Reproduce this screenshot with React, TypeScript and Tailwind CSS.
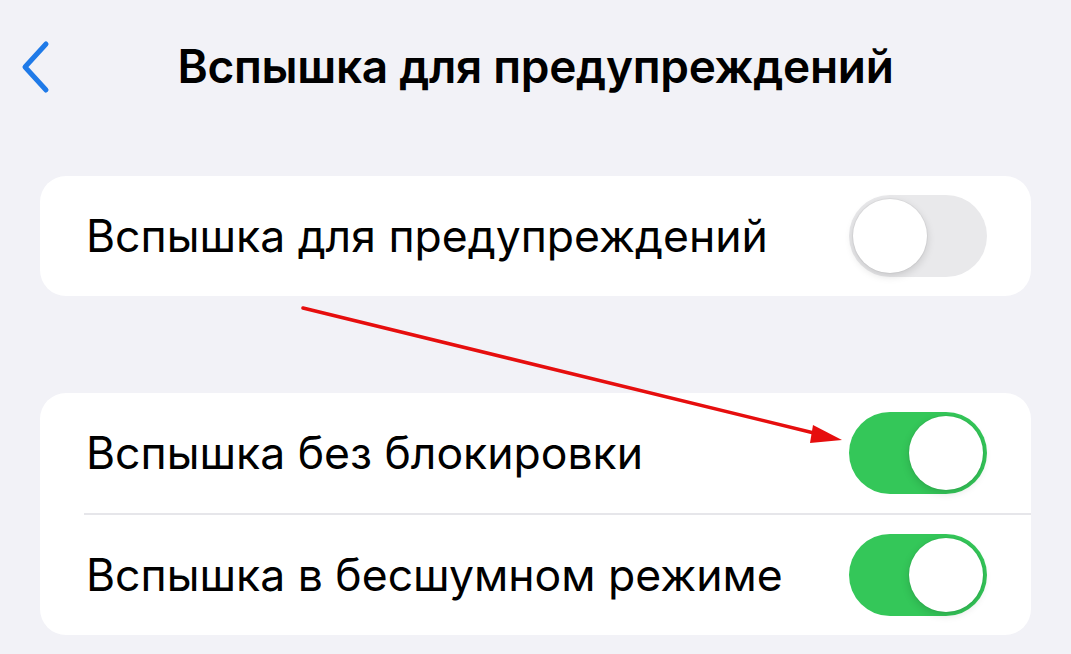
import { useState } from 'react';

type ToggleProps = {
  on: boolean;
  onChange: () => void;
};

function Toggle({ on, onChange }: ToggleProps) {
  return (
    <button
      onClick={onChange}
      className={`relative h-[82px] w-[138px] shrink-0 rounded-full transition-colors ${
        on ? 'bg-[#34c759]' : 'bg-[#e9e9eb]'
      }`}
    >
      <span
        className={`absolute top-[4px] h-[74px] w-[74px] rounded-full bg-white shadow-[0_3px_8px_rgba(0,0,0,0.15),0_0_0_1px_rgba(0,0,0,0.04)] transition-all ${
          on ? 'left-[60px]' : 'left-[4px]'
        }`}
      />
    </button>
  );
}

export default function App() {
  const [alertFlash, setAlertFlash] = useState(false);
  const [unlocked, setUnlocked] = useState(true);
  const [silent, setSilent] = useState(true);

  return (
    <div
      className="relative h-[654px] w-[1071px] overflow-hidden bg-[#f2f2f7] text-black"
      style={{ fontFamily: 'Inter, "Noto Sans", sans-serif' }}
    >
      {/* Nav bar */}
      <div className="relative flex h-[136px] items-center justify-center pb-[4px]">
        <button className="absolute left-[14px] top-[36px] p-1">
          <svg width="34" height="54" viewBox="0 0 34 54" fill="none">
            <path
              d="M28 4 L7 27 L28 50"
              stroke="#1f7ae8"
              strokeWidth="5"
              strokeLinecap="round"
              strokeLinejoin="round"
            />
          </svg>
        </button>
        <h1 className="text-[46px] font-semibold tracking-[-0.3px]">Вспышка для предупреждений</h1>
      </div>

      <div className="flex flex-col gap-[97px] px-[40px] pt-[40px]">
        {/* Main switch */}
        <div className="flex h-[120px] items-center justify-between rounded-[26px] bg-white pl-[46px] pr-[44px]">
          <span className="text-[44.5px]">Вспышка для предупреждений</span>
          <Toggle on={alertFlash} onChange={() => setAlertFlash(!alertFlash)} />
        </div>

        {/* Options */}
        <div className="rounded-[26px] bg-white">
          <div className="flex h-[120px] items-center justify-between pl-[46px] pr-[44px]">
            <span className="text-[44.5px]">Вспышка без блокировки</span>
            <Toggle on={unlocked} onChange={() => setUnlocked(!unlocked)} />
          </div>
          <div className="ml-[44px] h-[2px] bg-[#e6e6ea]" />
          <div className="flex h-[120px] items-center justify-between pl-[46px] pr-[44px]">
            <span className="text-[44.5px]">Вспышка в бесшумном режиме</span>
            <Toggle on={silent} onChange={() => setSilent(!silent)} />
          </div>
        </div>
      </div>

      {/* Annotation arrow */}
      <svg
        className="pointer-events-none absolute left-0 top-0"
        width="1071"
        height="654"
        viewBox="0 0 1071 654"
      >
        <line x1="303" y1="308" x2="818" y2="434" stroke="#e60e0e" strokeWidth="3.5" strokeLinecap="round" />
        <polygon points="842,440 813,425 810,443" fill="#e60e0e" />
      </svg>
    </div>
  );
}
